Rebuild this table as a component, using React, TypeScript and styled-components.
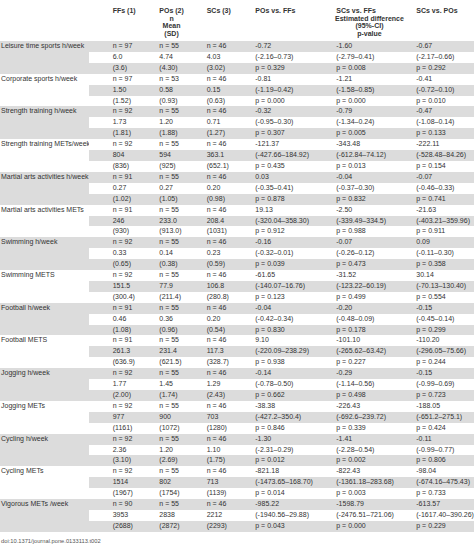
import React from 'react';
import styled, { createGlobalStyle } from 'styled-components';

const GlobalStyle = createGlobalStyle`
html, body {
    margin: 0;
    padding: 0;
    background: #ffffff;
}
body {
    overflow: hidden;
}
`;

// row height measured off the reference: 45 rows between y=41 and y=532
const ROW = 10.91;

type Group = {
    label: string;
    n: string[];
    mean: string[];
    sd: string[];
    est: string[];
    ci: string[];
    p: string[];
};

const groups: Group[] = [
    { label: 'Leisure time sports h/week', n: ['97', '55', '46'], mean: ['6.0', '4.74', '4.03'], sd: ['3.6', '4.30', '3.02'], est: ['-0.72', '-1.60', '-0.67'], ci: ['-2.16–0.73', '-2.79–0.41', '-2.17–0.66'], p: ['0.329', '0.008', '0.292'] },
    { label: 'Corporate sports h/week', n: ['97', '53', '46'], mean: ['1.50', '0.58', '0.15'], sd: ['1.52', '0.93', '0.63'], est: ['-0.81', '-1.21', '-0.41'], ci: ['-1.19–0.42', '-1.58–0.85', '-0.72–0.10'], p: ['0.000', '0.000', '0.010'] },
    { label: 'Strength training h/week', n: ['92', '55', '46'], mean: ['1.73', '1.20', '0.71'], sd: ['1.81', '1.88', '1.27'], est: ['-0.32', '-0.79', '-0.47'], ci: ['-0.95–0.30', '-1.34–0.24', '-1.08–0.14'], p: ['0.307', '0.005', '0.133'] },
    { label: 'Strength training METs/week', n: ['92', '55', '46'], mean: ['804', '594', '363.1'], sd: ['836', '925', '652.1'], est: ['-121.37', '-343.48', '-222.11'], ci: ['-427.66–184.92', '-612.84–74.12', '-528.48–84.26'], p: ['0.435', '0.013', '0.154'] },
    { label: 'Martial arts activities h/week', n: ['91', '55', '46'], mean: ['0.27', '0.27', '0.20'], sd: ['1.02', '1.05', '0.98'], est: ['0.03', '-0.04', '-0.07'], ci: ['-0.35–0.41', '-0.37–0.30', '-0.46–0.33'], p: ['0.878', '0.832', '0.741'] },
    { label: 'Martial arts activities METs', n: ['91', '55', '46'], mean: ['246', '233.0', '208.4'], sd: ['930', '913.0', '1031'], est: ['19.13', '-2.50', '-21.63'], ci: ['-320.04–358.30', '-339.49–334.5', '-403.21–359.96'], p: ['0.912', '0.988', '0.911'] },
    { label: 'Swimming h/week', n: ['92', '55', '46'], mean: ['0.33', '0.14', '0.23'], sd: ['0.65', '0.38', '0.59'], est: ['-0.16', '-0.07', '0.09'], ci: ['-0.32–0.01', '-0.26–0.12', '-0.11–0.30'], p: ['0.039', '0.473', '0.358'] },
    { label: 'Swimming METS', n: ['92', '55', '46'], mean: ['151.5', '77.9', '106.8'], sd: ['300.4', '211.4', '280.8'], est: ['-61.65', '-31.52', '30.14'], ci: ['-140.07–16.76', '-123.22–60.19', '-70.13–130.40'], p: ['0.123', '0.499', '0.554'] },
    { label: 'Football h/week', n: ['91', '55', '46'], mean: ['0.46', '0.36', '0.20'], sd: ['1.08', '0.96', '0.54'], est: ['-0.04', '-0.20', '-0.15'], ci: ['-0.42–0.34', '-0.48–0.09', '-0.45–0.14'], p: ['0.830', '0.178', '0.299'] },
    { label: 'Football METS', n: ['91', '55', '46'], mean: ['261.3', '231.4', '117.3'], sd: ['636.9', '621.5', '328.7'], est: ['9.10', '-101.10', '-110.20'], ci: ['-220.09–238.29', '-265.62–63.42', '-296.05–75.66'], p: ['0.938', '0.227', '0.244'] },
    { label: 'Jogging h/week', n: ['92', '55', '46'], mean: ['1.77', '1.45', '1.29'], sd: ['2.00', '1.74', '2.43'], est: ['-0.14', '-0.29', '-0.15'], ci: ['-0.78–0.50', '-1.14–0.56', '-0.99–0.69'], p: ['0.662', '0.498', '0.723'] },
    { label: 'Jogging METs', n: ['92', '55', '46'], mean: ['977', '900', '703'], sd: ['1161', '1072', '1280'], est: ['-38.38', '-226.43', '-188.05'], ci: ['-427.2–350.4', '-692.6–239.72', '-651.2–275.1'], p: ['0.846', '0.339', '0.424'] },
    { label: 'Cycling h/week', n: ['92', '55', '46'], mean: ['2.36', '1.20', '1.10'], sd: ['3.10', '2.69', '1.75'], est: ['-1.30', '-1.41', '-0.11'], ci: ['-2.31–0.29', '-2.28–0.54', '-0.99–0.77'], p: ['0.012', '0.002', '0.806'] },
    { label: 'Cycling METs', n: ['92', '55', '46'], mean: ['1514', '802', '713'], sd: ['1967', '1754', '1139'], est: ['-821.18', '-822.43', '-98.04'], ci: ['-1473.65–168.70', '-1361.18–283.68', '-674.16–475.43'], p: ['0.014', '0.003', '0.733'] },
    { label: 'Vigorous METs /week', n: ['90', '55', '46'], mean: ['3953', '2838', '2212'], sd: ['2688', '2872', '2293'], est: ['-985.22', '-1598.79', '-613.57'], ci: ['-1940.56–29.88', '-2476.51–721.06', '-1617.40–390.26'], p: ['0.043', '0.000', '0.229'] },
];

const Page = styled.div`
width: 474px;
overflow: hidden;
font-family: "Liberation Sans", Arial, Helvetica, sans-serif;
font-size: 7px;
color: #333333;
`;

const Table = styled.div`
display: grid;
grid-template-columns: 89px 66.3px 47.4px 48.6px 81px 80px 61.7px;
grid-template-rows: 41px;
grid-auto-rows: ${ROW}px;
`;

const HeadCell = styled.div`
font-weight: bold;
line-height: 7.5px;
padding-top: 7px;
padding-left: ${props => (props.$first ? '23.7px' : '4px')};
white-space: nowrap;
`;

const HeadStack = styled.div`
display: inline-block;
text-align: center;
`;

const HeadSub = styled.div`
width: 69px;
margin-left: -1.3px;
text-align: center;
`;

const LabelCell = styled.div`
grid-row: span 3;
padding-left: 1px;
line-height: ${ROW}px;
white-space: nowrap;
background-color: ${props => (props.$shaded ? '#dcdcdc' : '#ffffff')};
`;

const Cell = styled.div`
padding-left: ${props => (props.$first ? '23.7px' : '4px')};
line-height: ${ROW}px;
white-space: nowrap;
overflow: hidden;
background-color: ${props => (props.$shaded ? '#dcdcdc' : '#ffffff')};
`;

const Footer = styled.div`
margin-top: 6px;
padding-left: 1px;
font-size: 5.75px;
line-height: 6px;
color: #555555;
white-space: nowrap;
`;

const GroupRows = ({ group, index }: { group: Group; index: number }) => {
    const rows: string[][] = [
        [...group.n.map(v => 'n = ' + v), ...group.est],
        [...group.mean, ...group.ci.map(v => '(' + v + ')')],
        [...group.sd.map(v => '(' + v + ')'), ...group.p.map(v => 'p = ' + v)],
    ];
    return (
        <>
            <LabelCell $shaded={index % 2 === 0}>{group.label}</LabelCell>
            {rows.map((row, r) => {
                const shaded = (index * 3 + r) % 2 === 0;
                return row.map((text, c) => (
                    <Cell key={r + '-' + c} $shaded={shaded} $first={c === 0}>{text}</Cell>
                ));
            })}
        </>
    );
};

export default function App(): JSX.Element {
    return (
        <Page>
            <GlobalStyle />
            <Table>
                <HeadCell />
                <HeadCell $first>FFs (1)</HeadCell>
                <HeadCell>
                    <HeadStack>POs (2)<br />n<br />Mean<br />(SD)</HeadStack>
                </HeadCell>
                <HeadCell>SCs (3)</HeadCell>
                <HeadCell>POs vs. FFs</HeadCell>
                <HeadCell>
                    SCs vs. FFs
                    <HeadSub>Estimated difference<br />(95%-CI)<br />p-value</HeadSub>
                </HeadCell>
                <HeadCell>SCs vs. POs</HeadCell>
                {groups.map((g, i) => <GroupRows key={g.label} group={g} index={i} />)}
            </Table>
            <Footer>doi:10.1371/journal.pone.0133113.t002</Footer>
        </Page>
    );
}
